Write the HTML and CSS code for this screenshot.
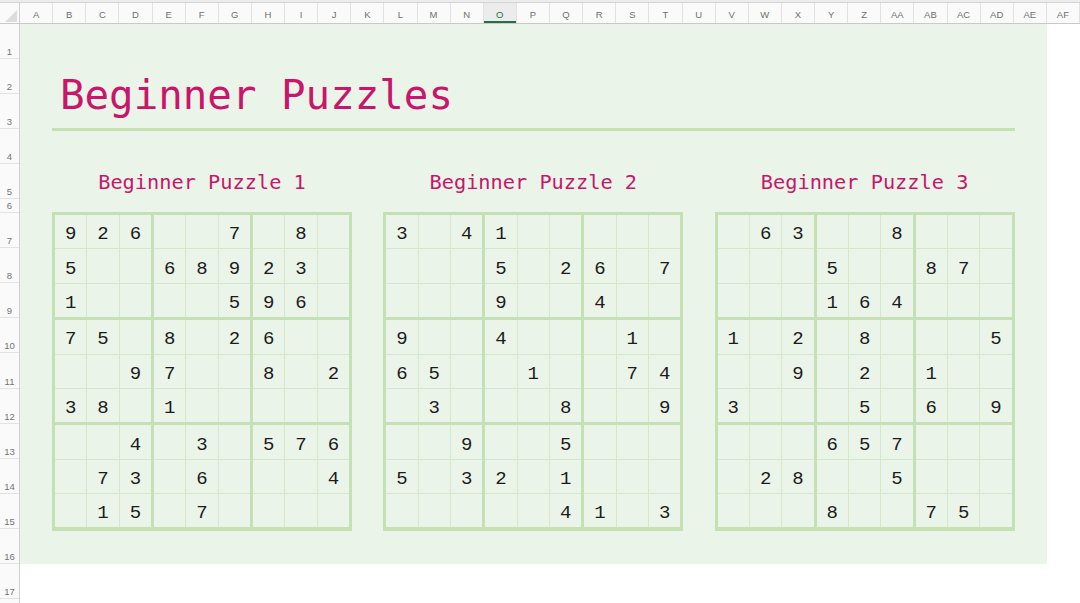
FILE: index.html
```html
<!DOCTYPE html>
<html>
<head>
<meta charset="utf-8">
<link rel="stylesheet" href="styles.css">
</head>
<body>
<div class="topbar"></div>
<div class="colhead">
  <div class="corner"><svg width="12" height="12" viewBox="0 0 12 12"><polygon points="12,0 12,12 0,12" fill="#dcdcdc"/></svg></div>
  <div class="col">A</div><div class="col">B</div><div class="col">C</div><div class="col">D</div><div class="col">E</div><div class="col">F</div><div class="col">G</div><div class="col">H</div><div class="col">I</div><div class="col">J</div><div class="col">K</div><div class="col">L</div><div class="col">M</div><div class="col">N</div><div class="col sel">O</div><div class="col">P</div><div class="col">Q</div><div class="col">R</div><div class="col">S</div><div class="col">T</div><div class="col">U</div><div class="col">V</div><div class="col">W</div><div class="col">X</div><div class="col">Y</div><div class="col">Z</div><div class="col">AA</div><div class="col">AB</div><div class="col">AC</div><div class="col">AD</div><div class="col">AE</div><div class="col">AF</div>
</div>
<div class="main">
  <div class="rowhead">
    <div class="r">1</div><div class="r">2</div><div class="r">3</div><div class="r">4</div><div class="r">5</div><div class="r short">6</div>
    <div class="r grid">7</div><div class="r grid">8</div><div class="r grid">9</div><div class="r grid">10</div><div class="r grid">11</div><div class="r grid">12</div><div class="r grid">13</div><div class="r grid">14</div><div class="r grid">15</div>
    <div class="r">16</div><div class="r">17</div><div class="r blank"></div>
  </div>
  <div class="sheet">
    <div class="green">
      <div class="titlebar"><h1 class="title">Beginner Puzzles</h1></div>
      <div class="puzzles">
        <section class="puzzle">
          <h2 class="caption">Beginner Puzzle 1</h2>
          <div class="board">
            <div class="box"><span class="c">9</span><span class="c">2</span><span class="c">6</span><span class="c">5</span><span class="c"></span><span class="c"></span><span class="c">1</span><span class="c"></span><span class="c"></span></div>
            <div class="box"><span class="c"></span><span class="c"></span><span class="c">7</span><span class="c">6</span><span class="c">8</span><span class="c">9</span><span class="c"></span><span class="c"></span><span class="c">5</span></div>
            <div class="box"><span class="c"></span><span class="c">8</span><span class="c"></span><span class="c">2</span><span class="c">3</span><span class="c"></span><span class="c">9</span><span class="c">6</span><span class="c"></span></div>
            <div class="box"><span class="c">7</span><span class="c">5</span><span class="c"></span><span class="c"></span><span class="c"></span><span class="c">9</span><span class="c">3</span><span class="c">8</span><span class="c"></span></div>
            <div class="box"><span class="c">8</span><span class="c"></span><span class="c">2</span><span class="c">7</span><span class="c"></span><span class="c"></span><span class="c">1</span><span class="c"></span><span class="c"></span></div>
            <div class="box"><span class="c">6</span><span class="c"></span><span class="c"></span><span class="c">8</span><span class="c"></span><span class="c">2</span><span class="c"></span><span class="c"></span><span class="c"></span></div>
            <div class="box"><span class="c"></span><span class="c"></span><span class="c">4</span><span class="c"></span><span class="c">7</span><span class="c">3</span><span class="c"></span><span class="c">1</span><span class="c">5</span></div>
            <div class="box"><span class="c"></span><span class="c">3</span><span class="c"></span><span class="c"></span><span class="c">6</span><span class="c"></span><span class="c"></span><span class="c">7</span><span class="c"></span></div>
            <div class="box"><span class="c">5</span><span class="c">7</span><span class="c">6</span><span class="c"></span><span class="c"></span><span class="c">4</span><span class="c"></span><span class="c"></span><span class="c"></span></div>
          </div>
        </section>
        <section class="puzzle">
          <h2 class="caption">Beginner Puzzle 2</h2>
          <div class="board">
            <div class="box"><span class="c">3</span><span class="c"></span><span class="c">4</span><span class="c"></span><span class="c"></span><span class="c"></span><span class="c"></span><span class="c"></span><span class="c"></span></div>
            <div class="box"><span class="c">1</span><span class="c"></span><span class="c"></span><span class="c">5</span><span class="c"></span><span class="c">2</span><span class="c">9</span><span class="c"></span><span class="c"></span></div>
            <div class="box"><span class="c"></span><span class="c"></span><span class="c"></span><span class="c">6</span><span class="c"></span><span class="c">7</span><span class="c">4</span><span class="c"></span><span class="c"></span></div>
            <div class="box"><span class="c">9</span><span class="c"></span><span class="c"></span><span class="c">6</span><span class="c">5</span><span class="c"></span><span class="c"></span><span class="c">3</span><span class="c"></span></div>
            <div class="box"><span class="c">4</span><span class="c"></span><span class="c"></span><span class="c"></span><span class="c">1</span><span class="c"></span><span class="c"></span><span class="c"></span><span class="c">8</span></div>
            <div class="box"><span class="c"></span><span class="c">1</span><span class="c"></span><span class="c"></span><span class="c">7</span><span class="c">4</span><span class="c"></span><span class="c"></span><span class="c">9</span></div>
            <div class="box"><span class="c"></span><span class="c"></span><span class="c">9</span><span class="c">5</span><span class="c"></span><span class="c">3</span><span class="c"></span><span class="c"></span><span class="c"></span></div>
            <div class="box"><span class="c"></span><span class="c"></span><span class="c">5</span><span class="c">2</span><span class="c"></span><span class="c">1</span><span class="c"></span><span class="c"></span><span class="c">4</span></div>
            <div class="box"><span class="c"></span><span class="c"></span><span class="c"></span><span class="c"></span><span class="c"></span><span class="c"></span><span class="c">1</span><span class="c"></span><span class="c">3</span></div>
          </div>
        </section>
        <section class="puzzle">
          <h2 class="caption">Beginner Puzzle 3</h2>
          <div class="board">
            <div class="box"><span class="c"></span><span class="c">6</span><span class="c">3</span><span class="c"></span><span class="c"></span><span class="c"></span><span class="c"></span><span class="c"></span><span class="c"></span></div>
            <div class="box"><span class="c"></span><span class="c"></span><span class="c">8</span><span class="c">5</span><span class="c"></span><span class="c"></span><span class="c">1</span><span class="c">6</span><span class="c">4</span></div>
            <div class="box"><span class="c"></span><span class="c"></span><span class="c"></span><span class="c">8</span><span class="c">7</span><span class="c"></span><span class="c"></span><span class="c"></span><span class="c"></span></div>
            <div class="box"><span class="c">1</span><span class="c"></span><span class="c">2</span><span class="c"></span><span class="c"></span><span class="c">9</span><span class="c">3</span><span class="c"></span><span class="c"></span></div>
            <div class="box"><span class="c"></span><span class="c">8</span><span class="c"></span><span class="c"></span><span class="c">2</span><span class="c"></span><span class="c"></span><span class="c">5</span><span class="c"></span></div>
            <div class="box"><span class="c"></span><span class="c"></span><span class="c">5</span><span class="c">1</span><span class="c"></span><span class="c"></span><span class="c">6</span><span class="c"></span><span class="c">9</span></div>
            <div class="box"><span class="c"></span><span class="c"></span><span class="c"></span><span class="c"></span><span class="c">2</span><span class="c">8</span><span class="c"></span><span class="c"></span><span class="c"></span></div>
            <div class="box"><span class="c">6</span><span class="c">5</span><span class="c">7</span><span class="c"></span><span class="c"></span><span class="c">5</span><span class="c">8</span><span class="c"></span><span class="c"></span></div>
            <div class="box"><span class="c"></span><span class="c"></span><span class="c"></span><span class="c"></span><span class="c"></span><span class="c"></span><span class="c">7</span><span class="c">5</span><span class="c"></span></div>
          </div>
        </section>
      </div>
    </div>
  </div>
</div>
</body>
</html>
```
FILE: styles.css
```css
* { box-sizing: border-box; margin: 0; padding: 0; }
html, body { width: 1080px; height: 603px; overflow: hidden; background: #ffffff; }
body { font-family: "Liberation Sans", Arial, sans-serif; }

.topbar { height: 3px; background: #ececec; border-bottom: 1px solid #d4d4d4; }

.colhead { display: flex; height: 21px; background: #fafafa; border-bottom: 1px solid #c9c9c9; }
.corner { flex: 0 0 20px; border-right: 1px solid #cfcfcf; position: relative; }
.corner svg { position: absolute; right: 2px; bottom: 1px; }
.col { flex: 0 0 33.13px; border-right: 1px solid #e1e1e1; font-size: 9.5px; color: #707070;
  display: flex; align-items: center; justify-content: center; padding-top: 2px; }
.col.sel { background: #ececec; color: #1f6b3c; box-shadow: inset 0 -2px 0 #217346; }

.main { display: flex; }
.rowhead { flex: 0 0 20px; border-right: 1px solid #cfcfcf; background: #fafafa; }
.r { height: 35px; border-bottom: 1px solid #e2e2e2; font-size: 9.5px; color: #747474;
  display: flex; align-items: flex-end; justify-content: center; padding-bottom: 1px; line-height: 10px; }
.r.short { height: 14px; }
.r.grid { height: 35.11px; }
.r.blank { height: 4px; border-bottom: 0; }

.sheet { flex: 1; }
.green { width: 1027px; height: 540px; background: #ebf4e9; padding: 35px 0 0 32px; }

.titlebar { width: 962.6px; height: 72px; border-bottom: 3px solid #c6e0b5; padding: 16px 0 0 8px; }
.title { font-family: "DejaVu Sans Mono", monospace; font-size: 40.8px; line-height: 40px;
  font-weight: normal; color: #c8166b; }

.puzzles { display: flex; gap: 31.3px; }
.puzzle { width: 300px; }
.caption { height: 81px; padding-top: 41px; font-family: "DejaVu Sans Mono", monospace;
  font-size: 20.3px; line-height: 20px; font-weight: normal; color: #c8166b; text-align: center; }

.board { height: 318.5px; background: #c6e0b5; padding: 3px; display: grid;
  grid-template-columns: repeat(3, 1fr); grid-template-rows: repeat(3, 1fr); gap: 3px; }
.box { background: #d3e8cb; display: grid; grid-template-columns: repeat(3, 1fr);
  grid-template-rows: repeat(3, 1fr); gap: 1px; }
.c { background: #ebf4e9; display: flex; align-items: center; justify-content: center;
  font-family: "Liberation Mono", monospace; font-size: 19px; color: #1b1b1b; padding-top: 5px; }
```
